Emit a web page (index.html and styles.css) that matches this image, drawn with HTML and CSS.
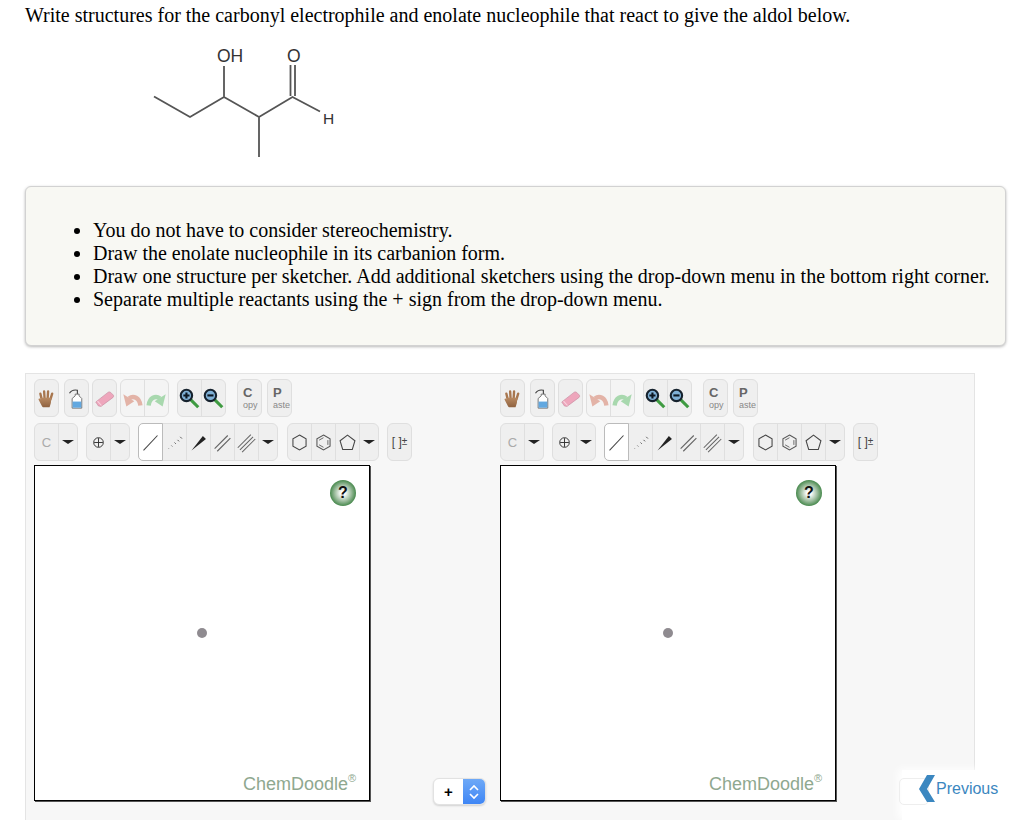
FILE: index.html
```html
<!DOCTYPE html>
<html lang="en">
<head>
<meta charset="utf-8">
<title>Aldol question</title>
<link rel="stylesheet" href="styles.css">
</head>
<body>
<svg class="defs" width="0" height="0" aria-hidden="true">
  <defs>
    <linearGradient id="g-hand" x1="0" y1="0" x2="0" y2="1">
      <stop offset="0" stop-color="#b98a62"/>
      <stop offset="1" stop-color="#8f6240"/>
    </linearGradient>
    <symbol id="i-hand" viewBox="0 0 24 24">
      <path d="M6.500 13 L5 6.500 M9.800 12 L9.300 4 M13.300 12 L13.800 4 M16.500 13 L18.500 6.500" fill="none" stroke="#a8764e" stroke-width="2.700" stroke-linecap="round"/>
      <path d="M7 21 L3 13.500 C2.500 12 4 11 5.500 13 L6 11 H17.500 L17 17 L15.500 22 H8 Z" fill="url(#g-hand)"/>
    </symbol>
    <symbol id="i-bottle" viewBox="0 0 24 24">
      <path d="M4 6 C6 2.500 10 2 13 2.500 V7" fill="none" stroke="#444" stroke-width="1.300"/>
      <path d="M10.500 7 H15 V9 L18 12 V23 H7 V12 L10.500 9 Z" fill="#fff" stroke="#666" stroke-width="1"/>
      <path d="M7.500 15.500 H17.500 V22.500 H7.500 Z" fill="#62a8e0"/>
    </symbol>
    <symbol id="i-eraser" viewBox="0 0 24 24">
      <path d="M2 16 L16 5 C17 4.300 18 4.300 19 5 L22 8 C22.800 9 22.500 10 21.500 11 L8 21 L5 20.500 Z" fill="#eea6bc" stroke="#c48a9e" stroke-width=".7"/>
      <path d="M4 15 L8.500 20" stroke="#f9d5e0" stroke-width="1.200"/>
    </symbol>
    <symbol id="i-undo" viewBox="0 0 24 24">
      <path d="M21 20 C20 11 13 8 8 12" fill="none" stroke="#e3b3a7" stroke-width="5"/>
      <path d="M1.500 7 L5 21 L14 15 Z" fill="#e3b3a7"/>
    </symbol>
    <symbol id="i-redo" viewBox="0 0 24 24">
      <path d="M3 20 C4 11 11 8 16 12" fill="none" stroke="#a8d8ae" stroke-width="5"/>
      <path d="M22.500 7 L19 21 L10 15 Z" fill="#a8d8ae"/>
    </symbol>
    <symbol id="i-zoomin" viewBox="0 0 24 24">
      <path d="M13 13 L22 22" stroke="#3f9b42" stroke-width="3.600"/>
      <circle cx="8.500" cy="8.500" r="6.500" fill="#7fb0d6" stroke="#16222e" stroke-width="2.400"/>
      <path d="M5 8.500 H12 M8.500 5 V12" stroke="#0c1722" stroke-width="2.400"/>
    </symbol>
    <symbol id="i-zoomout" viewBox="0 0 24 24">
      <path d="M13 13 L22 22" stroke="#3f9b42" stroke-width="3.600"/>
      <circle cx="8.500" cy="8.500" r="6.500" fill="#7fb0d6" stroke="#16222e" stroke-width="2.400"/>
      <path d="M5 8.500 H12" stroke="#0c1722" stroke-width="2.400"/>
    </symbol>
    <symbol id="i-add" viewBox="0 0 24 24">
      <circle cx="12" cy="12" r="5.500" fill="none" stroke="#333" stroke-width="1.100"/>
      <path d="M7 12 H17 M12 7 V17" stroke="#333" stroke-width="1.100"/>
    </symbol>
    <symbol id="i-single" viewBox="0 0 24 24">
      <path d="M4 21 L20 4" stroke="#444" stroke-width="1.200"/>
    </symbol>
    <symbol id="i-dashed" viewBox="0 0 24 24">
      <path d="M5 18.500 L5.500 19 M8.500 15.500 L9.500 16.500 M12 12 L13.500 13.500 M15.500 9 L17.200 10.700 M18.500 5.500 L20.500 7.500" stroke="#555" stroke-width="1.100" fill="none"/>
    </symbol>
    <symbol id="i-wedge" viewBox="0 0 24 24">
      <path d="M4 21 L17 4.500 L20.500 8 Z" fill="#222"/>
    </symbol>
    <symbol id="i-double" viewBox="0 0 24 24">
      <path d="M3 19 L18 4 M6 22 L21 7" stroke="#666" stroke-width="1.300"/>
    </symbol>
    <symbol id="i-triple" viewBox="0 0 24 24">
      <path d="M2 18 L17 3 M4.500 20.500 L19.500 5.500 M7 23 L22 8" stroke="#666" stroke-width="1.200"/>
    </symbol>
    <symbol id="i-hex" viewBox="0 0 24 24">
      <path d="M12 3.500 L19.500 7.800 V16.200 L12 20.500 L4.500 16.200 V7.800 Z" fill="none" stroke="#444" stroke-width="1.200"/>
    </symbol>
    <symbol id="i-benzene" viewBox="0 0 24 24">
      <path d="M12 3.500 L19.500 7.800 V16.200 L12 20.500 L4.500 16.200 V7.800 Z" fill="none" stroke="#555" stroke-width="1.200"/>
      <path d="M7 9.300 L12 6.500 M17 9.300 V14.700 M12 17.500 L7 14.700" stroke="#666" stroke-width="1.100"/>
    </symbol>
    <symbol id="i-pent" viewBox="0 0 24 24">
      <path d="M12 3.500 L20.500 10 L17.500 20 H6.500 L3.500 10 Z" fill="none" stroke="#444" stroke-width="1.200"/>
    </symbol>
  </defs>
</svg>

<main class="page">
  <h1 class="question">Write structures for the carbonyl electrophile and enolate nucleophile that react to give the aldol below.</h1>

  <svg class="molecule" width="200" height="126" viewBox="140 40 200 126" role="img" aria-label="3-hydroxy-2-methylpentanal">
    <path class="bond" d="M154 96.500 L190 117 L224 97 L259 117 L292.500 97 L320 111.500 M224 97 V66 M259 117 V157 M290.500 96 V65 M295 96 V65"/>
    <text class="atom" x="217" y="62">OH</text>
    <text class="atom" x="287" y="62">O</text>
    <text class="atom atom-small" x="323" y="124">H</text>
  </svg>

  <section class="notes">
    <ul class="note-list">
      <li>You do not have to consider stereochemistry.</li>
      <li>Draw the enolate nucleophile in its carbanion form.</li>
      <li>Draw one structure per sketcher. Add additional sketchers using the drop-down menu in the bottom right corner.</li>
      <li>Separate multiple reactants using the + sign from the drop-down menu.</li>
    </ul>
  </section>

  <section class="panel">
    <div class="sketcher">
      <div class="toolbar">
        <div class="group"><span class="btn"><svg class="ico"><use href="#i-hand"/></svg></span></div>
        <div class="group gap-5"><span class="btn"><svg class="ico"><use href="#i-bottle"/></svg></span></div>
        <div class="group gap-3"><span class="btn"><svg class="ico"><use href="#i-eraser"/></svg></span></div>
        <div class="group faded gap-3"><span class="btn"><svg class="ico"><use href="#i-undo"/></svg></span><span class="btn"><svg class="ico"><use href="#i-redo"/></svg></span></div>
        <div class="group gap-8"><span class="btn"><svg class="ico"><use href="#i-zoomin"/></svg></span><span class="btn"><svg class="ico"><use href="#i-zoomout"/></svg></span></div>
        <div class="group gap-11"><span class="btn btn-text"><b>C</b><small>opy</small></span></div>
        <div class="group gap-5"><span class="btn btn-text"><b>P</b><small>aste</small></span></div>
      </div>
      <div class="toolbar">
        <div class="group"><span class="btn btn-label">C</span><span class="btn btn-caret"><i class="caret"></i></span></div>
        <div class="group gap-8"><span class="btn"><svg class="ico"><use href="#i-add"/></svg></span><span class="btn btn-caret"><i class="caret"></i></span></div>
        <div class="group gap-8">
          <span class="btn btn-on"><svg class="ico"><use href="#i-single"/></svg></span>
          <span class="btn"><svg class="ico"><use href="#i-dashed"/></svg></span>
          <span class="btn"><svg class="ico"><use href="#i-wedge"/></svg></span>
          <span class="btn"><svg class="ico"><use href="#i-double"/></svg></span>
          <span class="btn"><svg class="ico"><use href="#i-triple"/></svg></span>
          <span class="btn btn-caret"><i class="caret"></i></span>
        </div>
        <div class="group gap-9">
          <span class="btn"><svg class="ico"><use href="#i-hex"/></svg></span>
          <span class="btn"><svg class="ico"><use href="#i-benzene"/></svg></span>
          <span class="btn"><svg class="ico"><use href="#i-pent"/></svg></span>
          <span class="btn btn-caret"><i class="caret"></i></span>
        </div>
        <div class="group gap-8"><span class="btn btn-bracket">[ ]<sup>±</sup></span></div>
      </div>
      <div class="canvas">
        <span class="help">?</span>
        <span class="dot"></span>
        <span class="brand">ChemDoodle<sup>®</sup></span>
      </div>
    </div>

    <div class="adder"><span class="adder-value">+</span><span class="adder-arrows"><svg width="12" height="20" viewBox="0 0 12 20"><path d="M2 8 L6 4 L10 8 M2 12 L6 16 L10 12" fill="none" stroke="#fff" stroke-width="1.600"/></svg></span></div>

    <div class="sketcher">
      <div class="toolbar">
        <div class="group"><span class="btn"><svg class="ico"><use href="#i-hand"/></svg></span></div>
        <div class="group gap-5"><span class="btn"><svg class="ico"><use href="#i-bottle"/></svg></span></div>
        <div class="group gap-3"><span class="btn"><svg class="ico"><use href="#i-eraser"/></svg></span></div>
        <div class="group faded gap-3"><span class="btn"><svg class="ico"><use href="#i-undo"/></svg></span><span class="btn"><svg class="ico"><use href="#i-redo"/></svg></span></div>
        <div class="group gap-8"><span class="btn"><svg class="ico"><use href="#i-zoomin"/></svg></span><span class="btn"><svg class="ico"><use href="#i-zoomout"/></svg></span></div>
        <div class="group gap-11"><span class="btn btn-text"><b>C</b><small>opy</small></span></div>
        <div class="group gap-5"><span class="btn btn-text"><b>P</b><small>aste</small></span></div>
      </div>
      <div class="toolbar">
        <div class="group"><span class="btn btn-label">C</span><span class="btn btn-caret"><i class="caret"></i></span></div>
        <div class="group gap-8"><span class="btn"><svg class="ico"><use href="#i-add"/></svg></span><span class="btn btn-caret"><i class="caret"></i></span></div>
        <div class="group gap-8">
          <span class="btn btn-on"><svg class="ico"><use href="#i-single"/></svg></span>
          <span class="btn"><svg class="ico"><use href="#i-dashed"/></svg></span>
          <span class="btn"><svg class="ico"><use href="#i-wedge"/></svg></span>
          <span class="btn"><svg class="ico"><use href="#i-double"/></svg></span>
          <span class="btn"><svg class="ico"><use href="#i-triple"/></svg></span>
          <span class="btn btn-caret"><i class="caret"></i></span>
        </div>
        <div class="group gap-9">
          <span class="btn"><svg class="ico"><use href="#i-hex"/></svg></span>
          <span class="btn"><svg class="ico"><use href="#i-benzene"/></svg></span>
          <span class="btn"><svg class="ico"><use href="#i-pent"/></svg></span>
          <span class="btn btn-caret"><i class="caret"></i></span>
        </div>
        <div class="group gap-8"><span class="btn btn-bracket">[ ]<sup>±</sup></span></div>
      </div>
      <div class="canvas">
        <span class="help">?</span>
        <span class="dot"></span>
        <span class="brand">ChemDoodle<sup>®</sup></span>
      </div>
    </div>
  </section>

  <div class="pager">
    <span class="pager-ghost"></span>
    <svg class="chevron" width="18" height="28" viewBox="0 0 18 28"><path d="M9 0 H17 L9 14 L17 27 H9 L1 14 Z" fill="#3b87c0"/></svg>
    <span class="pager-label">Previous</span>
  </div>
</main>
</body>
</html>
```

FILE: styles.css
```css
* { box-sizing: border-box; }

html, body {
  margin: 0;
  padding: 0;
  background: #fff;
}

body {
  width: 1024px;
  height: 820px;
  overflow: hidden;
  font-family: "Liberation Serif", "Times New Roman", serif;
  color: #000;
}

.defs { position: absolute; }

.page {
  position: relative;
  height: 820px;
  padding: 4px 0 0 25px;
  overflow: hidden;
}

.question {
  margin: 0;
  font-size: 20px;
  font-weight: 400;
  line-height: 22px;
  white-space: nowrap;
}

.molecule {
  display: block;
  margin: 14px 0 0 115px;
}

.bond {
  fill: none;
  stroke: #555;
  stroke-width: 1.800;
}

.atom {
  font-family: "Liberation Sans", Arial, sans-serif;
  font-size: 17.500px;
  fill: #333;
}

.atom.atom-small { font-size: 15.500px; }

.notes {
  width: 981px;
  height: 160px;
  margin-top: 20px;
  padding: 32px 0 0 67px;
  background: #f8f8f3;
  border: 1px solid #d2d2d2;
  border-radius: 6px;
  box-shadow: 0 1px 3px rgba(0, 0, 0, .28);
}

.note-list {
  margin: 0;
  padding: 0;
  font-size: 20px;
  line-height: 23px;
  white-space: nowrap;
}

.panel {
  display: flex;
  align-items: flex-start;
  width: 950px;
  height: 460px;
  margin-top: 27px;
  padding: 5px 0 0 8px;
  background: #f7f7f7;
  border: 1px solid #e4e4e4;
}

.sketcher {
  flex: none;
  width: 345px;
}

.toolbar {
  display: flex;
  height: 38px;
  margin-bottom: 6px;
}

.toolbar + .toolbar { margin-bottom: 4px; }

.group {
  display: flex;
  height: 38px;
  background: #efefef;
  border: 1px solid #dfdfdf;
  border-radius: 6px;
}

.group.faded { background: #f4f4f4; }
.gap-3 { margin-left: 3px; }
.gap-5 { margin-left: 5px; }
.gap-8 { margin-left: 8px; }
.gap-9 { margin-left: 9px; }
.gap-11 { margin-left: 11px; }

.btn {
  display: flex;
  align-items: center;
  justify-content: center;
  width: 24px;
  height: 36px;
  border-right: 1px solid #dfdfdf;
  color: #444;
  font-family: "Liberation Sans", Arial, sans-serif;
}

.btn:last-child {
  width: 23px;
  border-right: 0;
}

.ico { width: 21px; height: 21px; }

.btn-on {
  background: #fff;
  border: 1px solid #bbb;
  border-radius: 5px 0 0 5px;
  margin: -1px 0 -1px -1px;
  height: 38px;
  width: 25px;
}

.btn.btn-caret { width: 18px; }

.caret {
  width: 0;
  height: 0;
  border-left: 6px solid transparent;
  border-right: 6px solid transparent;
  border-top: 4px solid #222;
}

.btn-label {
  color: #aaa;
  font-size: 13px;
}

.btn-text {
  flex-direction: column;
  align-items: flex-start;
  padding-left: 5px;
  color: #666;
}

.btn-text b {
  font-size: 13px;
  line-height: 14px;
  font-weight: 700;
}

.btn-text small {
  font-size: 9px;
  line-height: 10px;
  color: #888;
  white-space: nowrap;
}

.btn-bracket {
  font-size: 12px;
  white-space: nowrap;
}

.btn-bracket sup {
  font-size: 10px;
  line-height: 0;
  vertical-align: 3px;
}

.canvas {
  position: relative;
  width: 336px;
  height: 336px;
  background: #fff;
  border: 1px solid #000;
  box-shadow: 1px 1px 0 #555;
}

.help {
  position: absolute;
  top: 14px;
  left: 295px;
  width: 26px;
  height: 26px;
  border-radius: 50%;
  background: radial-gradient(circle, #fff 12%, #9dbd9e 45%, #2f7a36 78%, #2a6a30 100%);
  color: #111;
  font: 700 16px/26px "Liberation Sans", Arial, sans-serif;
  text-align: center;
}

.dot {
  position: absolute;
  top: 162px;
  left: 162px;
  width: 10px;
  height: 10px;
  border-radius: 50%;
  background: #8f8b90;
}

.brand {
  position: absolute;
  top: 306px;
  left: 208px;
  color: #8fa88f;
  font: 18px/24px "Liberation Sans", Arial, sans-serif;
  white-space: nowrap;
}

.brand sup {
  font-size: 11px;
  line-height: 0;
  vertical-align: 8px;
}

.adder {
  flex: none;
  display: flex;
  width: 53px;
  height: 27px;
  margin: 399px 14px 0 54px;
  background: #fff;
  border: 1px solid #e2e2e2;
  border-radius: 6px;
  box-shadow: 0 1px 2px rgba(0, 0, 0, .15);
  overflow: hidden;
  font: 700 15px/25px "Liberation Sans", Arial, sans-serif;
}

.adder-value {
  flex: 1;
  text-align: center;
}

.adder-arrows {
  display: flex;
  align-items: center;
  justify-content: center;
  width: 22px;
  background: linear-gradient(#6ea9f7, #3f86f5);
}

.pager {
  position: absolute;
  top: 770px;
  right: 0;
  display: flex;
  align-items: center;
  width: 122px;
  height: 50px;
  padding: 0 0 12px 16px;
  background: #fff;
  box-shadow: -4px -1px 8px 0 #fff;
}

.pager-ghost {
  position: absolute;
  top: 8px;
  left: -3px;
  width: 30px;
  height: 27px;
  border: 1px solid #eee;
  border-radius: 5px;
}

.chevron { position: relative; flex: none; }

.pager-label {
  position: relative;
  color: #3b87c0;
  font: 16px/20px "Liberation Sans", Arial, sans-serif;
}
```
